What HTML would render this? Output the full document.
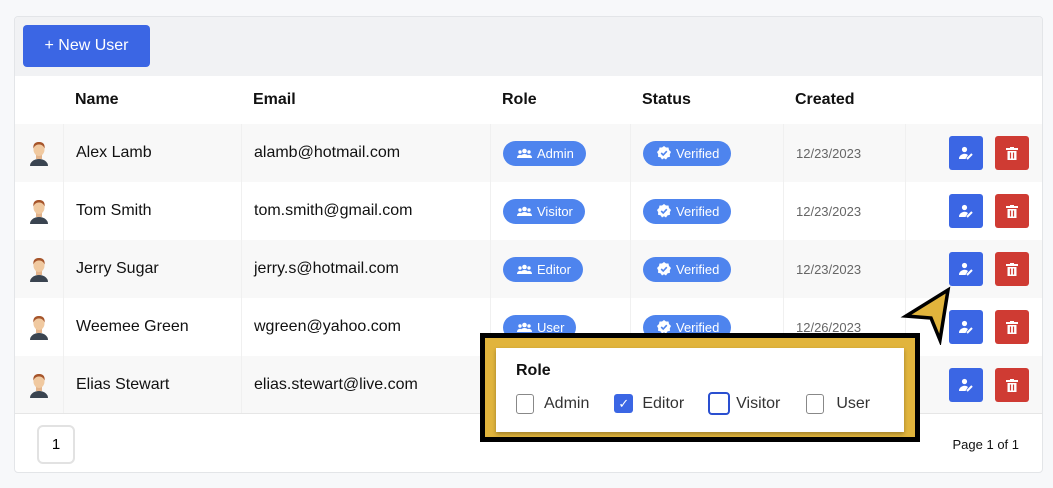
<!DOCTYPE html><html><head><style>
body{margin:0;width:1053px;height:488px;background:#f7f8fa;font-family:"Liberation Sans",sans-serif;position:relative;overflow:hidden}
.card{position:absolute;left:14px;top:16px;width:1027px;height:455px;border:1px solid #e3e5e8;border-radius:4px;background:#fff;overflow:hidden}
.top{position:absolute;left:0;top:0;width:100%;height:59px;background:#f1f2f4}
.nb{position:absolute;left:8px;top:8px;width:127px;height:42px;background:#3b66e4;border-radius:4px;color:#fff;font-size:16px;line-height:42px;text-align:center}
.row{position:absolute;left:0;width:100%;height:58px;font-size:16px;color:#111}
.row.g{background:#f8f8f8}
.c{position:absolute;top:0;height:100%;display:flex;align-items:center;border-left:1px solid #f0f0f0;box-sizing:border-box}
.hd{font-weight:bold;font-size:16px}
.pill{background:#4e84ee;color:#fff;font-size:13px;border-radius:13px;height:25px;padding:0 12px 0 14px;display:flex;align-items:center;gap:5px}
.date{color:#666;font-size:13px}
.bt{position:absolute;width:34px;height:34px;border-radius:3px;top:12px;display:flex;align-items:center;justify-content:center}
</style></head><body>
<div class="card">
<div class="top"><div class="nb">+ New User</div></div>
<div class="row" style="top:59px;height:48px">
<div class="c hd" style="left:60px;border:0">Name</div>
<div class="c hd" style="left:238px;border:0">Email</div>
<div class="c hd" style="left:487px;border:0">Role</div>
<div class="c hd" style="left:627px;border:0">Status</div>
<div class="c hd" style="left:780px;border:0">Created</div>
</div>
<div id="rows"></div>
<div style="position:absolute;left:0;top:396px;width:100%;border-top:1px solid #e6e6e6"></div>
<div style="position:absolute;left:22px;top:408px;width:34px;height:35px;border:2px solid #e2e2e2;border-radius:6px;text-align:center;line-height:35px;font-size:15px">1</div>
<div style="position:absolute;right:23px;top:420px;font-size:13px;color:#111">Page 1 of 1</div>
</div>
<script>
var d=[["Alex Lamb","alamb@hotmail.com","Admin","12/23/2023"],["Tom Smith","tom.smith@gmail.com","Visitor","12/23/2023"],["Jerry Sugar","jerry.s@hotmail.com","Editor","12/23/2023"],["Weemee Green","wgreen@yahoo.com","User","12/26/2023"],["Elias Stewart","elias.stewart@live.com","User","12/23/2023"]];
var h="";
var grp='<svg width="15" height="10" viewBox="0 0 15 10"><circle cx="7.5" cy="3" r="2.3" fill="#fff"/><circle cx="3" cy="4" r="1.7" fill="#fff"/><circle cx="12" cy="4" r="1.7" fill="#fff"/><path d="M3 10a4.5 4 0 0 1 9 0z" fill="#fff"/><path d="M0 10a3 3 0 0 1 4-3v3zM15 10a3 3 0 0 0-4-3v3z" fill="#fff"/></svg>';
var chk='<svg width="14" height="14" viewBox="0 0 14 14"><path d="M7 0l2 1.5 2.5 0 .5 2.5 2 2-1.2 2.3.2 2.5-2.5.6L9 13.5 7 12.3 5 13.5 3.6 11.4 1 10.8l.2-2.5L0 6l2-2 .5-2.5H5z" fill="#fff"/><path d="M4.2 7l2 2 3.6-3.8" stroke="#4e84ee" stroke-width="1.6" fill="none"/></svg>';
var av='<svg width="22" height="26" viewBox="0 0 22 26"><path d="M2 26a9 7 0 0 1 18 0z" fill="#3a4450"/><rect x="8" y="14" width="6" height="5" fill="#e3b48c"/><ellipse cx="11" cy="9.5" rx="5.5" ry="6.5" fill="#f0c9a0"/><path d="M5.3 8.5C5 3 8 2 11 2s6 1 5.7 6.5C15 5 13 4.5 11 4.5S7 5 5.3 8.5z" fill="#a6552b"/></svg>';
for(var i=0;i<5;i++){var r=d[i];h+='<div class="row'+(i%2==0?' g':'')+'" style="top:'+(107+i*58)+'px">'+
'<div class="c" style="left:0;width:48px;justify-content:center;border:0">'+av+'</div>'+
'<div class="c" style="left:48px;padding-left:12px">'+r[0]+'</div>'+
'<div class="c" style="left:226px;padding-left:12px">'+r[1]+'</div>'+
'<div class="c" style="left:475px;padding-left:12px"><div class="pill">'+grp+r[2]+'</div></div>'+
'<div class="c" style="left:615px;padding-left:12px"><div class="pill">'+chk+'Verified</div></div>'+
'<div class="c date" style="left:768px;padding-left:12px">'+r[3]+'</div>'+
'<div class="c" style="left:890px;width:137px"></div>'+
'<div class="bt" style="left:934px;background:#3b66e4"><svg width="14" height="14" viewBox="0 0 14 14"><circle cx="5.5" cy="3.5" r="2.6" fill="#fff"/><path d="M0 13a5.5 5 0 0 1 9-4L6.5 13z" fill="#fff"/><path d="M8 13l5-5" stroke="#fff" stroke-width="2"/></svg></div>'+
'<div class="bt" style="left:980px;background:#cf3b33"><svg width="12" height="13" viewBox="0 0 12 13"><rect x="0" y="1" width="12" height="2" fill="#fff"/><rect x="4" y="0" width="4" height="2" fill="#fff"/><path d="M1.5 4h9v9h-9z" fill="#fff"/><path d="M4.5 5.5v6M7.5 5.5v6" stroke="#cf3b33" stroke-width="1.2"/></svg></div>'+
'</div>';}
document.getElementById("rows").innerHTML=h;
</script>
<div style="position:absolute;left:480px;top:333px;width:440px;height:109px;background:#000"></div>
<div style="position:absolute;left:485px;top:338px;width:430px;height:99px;background:#e1b43c"></div>
<div style="position:absolute;left:496px;top:348px;width:408px;height:84px;background:#fff;box-shadow:0 2px 4px rgba(0,0,0,.3)">
<div style="position:absolute;left:20px;top:14px;font-size:16px;font-weight:bold;color:#111">Role</div>
<div style="position:absolute;left:20px;top:44px;display:flex;align-items:center;font-size:16px;color:#333">
<span style="width:16px;height:18px;border:1.5px solid #888;border-radius:3px;display:inline-block;margin-right:10px"></span>Admin
<span style="width:19px;height:19px;background:#3b66e4;border-radius:3px;display:inline-block;margin:0 9px 0 25px;color:#fff;font-size:13px;text-align:center;line-height:19px">✓</span>Editor
<span style="width:18px;height:19px;border:2.5px solid #2a4fd0;border-radius:4px;display:inline-block;margin:0 6px 0 24px"></span>Visitor
<span style="width:16px;height:18px;border:1.5px solid #888;border-radius:3px;display:inline-block;margin:0 12px 0 26px"></span>User
</div></div>
<svg style="position:absolute;left:900px;top:285px" width="55" height="60" viewBox="0 0 55 60"><path d="M48 5L6 31 31 33 40 55z" fill="#e1b43c" stroke="#000" stroke-width="3.5" stroke-linejoin="miter"/></svg>
</body></html>
